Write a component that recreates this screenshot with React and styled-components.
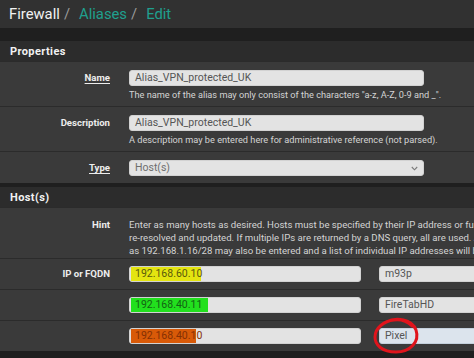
import React from "react";
import styled, { createGlobalStyle } from "styled-components";

const GlobalStyle = createGlobalStyle`
  html, body {
    margin: 0;
    padding: 0;
    background: #1f1f1f;
  }
  body {
    font-family: Roboto, "Liberation Sans", sans-serif;
    overflow: hidden;
  }
`;

const Page = styled.div`
  width: 474px;
  height: 358px;
  overflow: hidden;
  background: #1f1f1f;
`;

const Inner = styled.div`
  width: 600px;
`;

const Header = styled.div`
  height: 27px;
  padding-bottom: 1px;
  background: #313131;
  display: flex;
  align-items: center;
  padding-left: 9px;
  font-size: 14.8px;
  color: #f2f2f2;
`;

const Crumb = styled.span`
  color: ${(p) => (p.link ? "#1fa08e" : "#f2f2f2")};
`;

const Sep = styled.span`
  color: #9a9a9a;
  margin: 0 9px 0 4px;
`;

const Panel = styled.div`
  margin-top: ${(p) => p.gap}px;
  background: #3a3a3a;
`;

const Heading = styled.div`
  height: 20px;
  background: #2c2c2c;
  display: flex;
  align-items: center;
  padding-left: 10px;
  font-size: 11px;
  font-weight: 700;
  letter-spacing: 0.4px;
  color: #f2f2f2;
`;

const Row = styled.div`
  display: grid;
  grid-template-columns: 110px 1fr;
  column-gap: 19px;
  border-top: 1px solid #2b2b2b;
  padding: ${(p) => p.pad || "8px 0 5px"};
`;

const Label = styled.div`
  text-align: right;
  font-size: 9.6px;
  font-weight: 700;
  color: #ededed;
  line-height: ${(p) => p.lh || 16}px;

  span {
    text-decoration: ${(p) => (p.required ? "underline" : "none")};
    text-underline-offset: 2px;
  }
`;

const Field = styled.div`
  display: flex;
  flex-direction: column;
`;

const Fields = styled.div`
  display: flex;
  gap: 18px;
`;

const Input = styled.div`
  position: relative;
  box-sizing: border-box;
  width: ${(p) => p.w || 295}px;
  height: 16px;
  background: ${(p) => (p.focus ? "#dce4ed" : "#e3e3e3")};
  border: 1px solid ${(p) => (p.focus ? "#c4d0dc" : "#d2d2d2")};
  border-radius: 3px;
  padding: 0 5px;
  font-size: 10.5px;
  line-height: 14px;
  color: ${(p) => (p.muted ? "#6e6e6e" : "#555")};
  white-space: nowrap;
`;

const Chevron = styled.svg`
  position: absolute;
  right: 5px;
  top: 5px;
`;

const Help = styled.div`
  margin-top: 3px;
  font-size: 9.2px;
  line-height: 12px;
  color: #d4d4d4;
  white-space: nowrap;
`;

const HintText = styled.div`
  font-size: 9.6px;
  line-height: 13px;
  color: #d4d4d4;
  white-space: nowrap;
`;

const Mark = styled.span`
  display: inline-block;
  margin-left: -4px;
  padding-left: 4px;
  width: ${(p) => p.w}px;
  height: 14px;
  background: ${(p) => p.bg};
  color: ${(p) => p.fg};
`;

const Circle = styled.svg`
  position: absolute;
  left: -8px;
  top: -13px;
  overflow: visible;
`;

const hosts = [
  { ip: "192.168.60.10", bg: "#e4e410", fg: "#5a5a0c", w: 66, desc: "m93p", label: "IP or FQDN" },
  { ip: "192.168.40.11", bg: "#22e01e", fg: "#146214", w: 73, desc: "FireTabHD" },
  { ip: "192.168.40.10", bg: "#d85a08", fg: "#843004", w: 61, desc: "Pixel", circled: true },
];

export default function App() {
  return (
    <Page>
      <GlobalStyle />
      <Inner>
        <Header>
          <Crumb>Firewall</Crumb>
          <Sep>/</Sep>
          <Crumb link>Aliases</Crumb>
          <Sep>/</Sep>
          <Crumb link>Edit</Crumb>
        </Header>

        <Panel gap={13}>
          <Heading>Properties</Heading>
          <Row>
            <Label required><span>Name</span></Label>
            <Field>
              <Input>Alias_VPN_protected_UK</Input>
              <Help>The name of the alias may only consist of the characters "a-z, A-Z, 0-9 and _".</Help>
            </Field>
          </Row>
          <Row>
            <Label><span>Description</span></Label>
            <Field>
              <Input>Alias_VPN_protected_UK</Input>
              <Help>A description may be entered here for administrative reference (not parsed).</Help>
            </Field>
          </Row>
          <Row pad="8px 0 7px">
            <Label required><span>Type</span></Label>
            <Field>
              <Input muted>
                Host(s)
                <Chevron width="7" height="5" viewBox="0 0 7 5">
                  <path d="M0.8 1 L3.5 3.8 L6.2 1" fill="none" stroke="#7a7a7a" strokeWidth="1.1" />
                </Chevron>
              </Input>
            </Field>
          </Row>
        </Panel>

        <Panel gap={4}>
          <Heading>Host(s)</Heading>
          <Row pad="10px 0 1px">
            <Label lh={13}><span>Hint</span></Label>
            <div>
              <HintText>Enter as many hosts as desired. Hosts must be specified by their IP address or fully qualified domain name (FQDN). FQDN hostnames are periodically</HintText>
              <HintText>re-resolved and updated. If multiple IPs are returned by a DNS query, all are used. An IP range such as 192.168.1.1-192.168.1.10 or a small subnet such</HintText>
              <HintText>as 192.168.1.16/28 may also be entered and a list of individual IP addresses will be generated.</HintText>
            </div>
          </Row>
          {hosts.map((h) => (
            <Row key={h.ip} pad="7px 0">
              <Label><span>{h.label || ""}</span></Label>
              <Fields>
                <Input w={232}>
                  <Mark bg={h.bg} fg={h.fg} w={h.w}>{h.ip}</Mark>
                </Input>
                <Input w={200} focus={h.circled}>
                  {h.desc}
                  {h.circled && (
                    <Circle width="50" height="40" viewBox="0 0 50 40">
                      <path
                        d="M14 6 C24 1 40 3 44 14 C48 26 38 36 24 36 C10 36 3 29 3 21 C3 12 12 5 22 4 C30 3 36 6 40 10"
                        fill="none"
                        stroke="#e0141c"
                        strokeWidth="3"
                        strokeLinecap="round"
                      />
                    </Circle>
                  )}
                </Input>
              </Fields>
            </Row>
          ))}
        </Panel>
      </Inner>
    </Page>
  );
}
